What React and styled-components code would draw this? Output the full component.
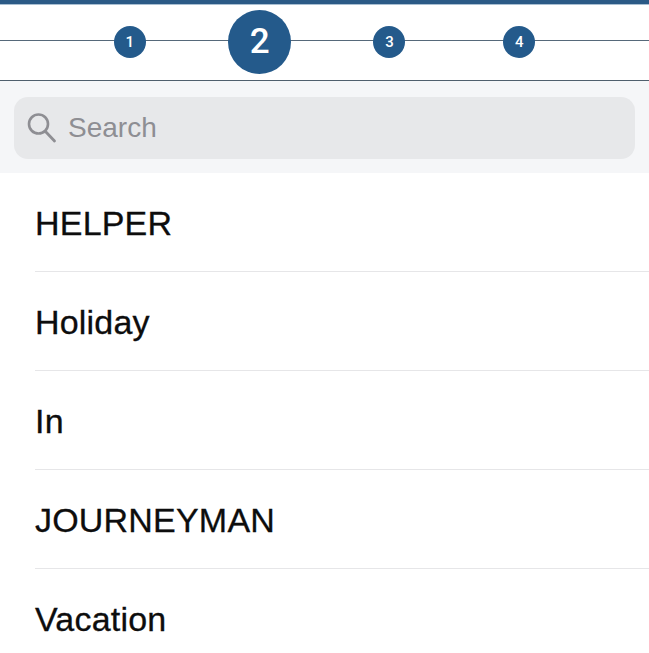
import React from "react";
import styled, { createGlobalStyle } from "styled-components";

const GlobalStyle = createGlobalStyle`
  html, body {
    margin: 0;
    padding: 0;
    background: #ffffff;
  }
  body {
    font-family: "Liberation Sans", Arial, sans-serif;
    overflow: hidden;
  }
`;

const Screen = styled.div`
  width: 649px;
  height: 653px;
  overflow: hidden;
  background: #ffffff;
`;

const TopBar = styled.div`
  height: 5px;
  background: #2b5a86;
  border-bottom: 1px solid #a9bfd2;
  box-sizing: border-box;
`;

const Stepper = styled.div`
  height: 76px;
  box-sizing: border-box;
  border-bottom: 1px solid #4f5f6d;
  padding: 0 64.9px;
  display: flex;
  align-items: center;
  background: linear-gradient(
    to bottom,
    transparent 35px,
    #56697a 35px,
    #56697a 36px,
    transparent 36px
  );
`;

const StepCell = styled.div`
  flex: 1;
  display: flex;
  justify-content: center;
  align-items: center;
`;

const StepDot = styled.div`
  width: ${(p) => (p.$active ? 63 : 32)}px;
  height: ${(p) => (p.$active ? 64 : 32)}px;
  border-radius: 50%;
  background: #245a8b;
  color: #ffffff;
  display: flex;
  align-items: center;
  justify-content: center;
  font-family: Roboto, "Liberation Sans", sans-serif;
  font-weight: 500;
  font-size: ${(p) => (p.$active ? 35 : 15)}px;
  margin-top: -2px;
`;

const SearchArea = styled.div`
  background: #f5f6f8;
  padding: 16px 14px 14px;
`;

const SearchBox = styled.div`
  height: 62px;
  border-radius: 14px;
  background: #e7e8ea;
  display: flex;
  align-items: center;
  gap: 11px;
  padding: 0 13px;
`;

const SearchText = styled.span`
  font-size: 28px;
  color: #8e8e93;
  font-family: "Liberation Sans", Arial, sans-serif;
`;

const List = styled.div`
  padding-left: 35px;
`;

const Row = styled.div`
  height: 99px;
  box-sizing: border-box;
  display: flex;
  align-items: center;
  border-bottom: 1px solid #e6e6e8;
  font-size: 34px;
  letter-spacing: 0.2px;
  color: #0d0d0d;
  padding-top: 2px;
  -webkit-text-stroke: 0.3px #0d0d0d;
`;

const SearchIcon = () => (
  <svg width="30" height="32" viewBox="0 0 30 32" fill="none">
    <circle cx="11.5" cy="12" r="9.5" stroke="#8e8e93" strokeWidth="2.6" />
    <line
      x1="18.5"
      y1="19.5"
      x2="27.5"
      y2="29"
      stroke="#8e8e93"
      strokeWidth="2.8"
      strokeLinecap="round"
    />
  </svg>
);

const steps = [1, 2, 3, 4];
const items = ["HELPER", "Holiday", "In", "JOURNEYMAN", "Vacation"];

const App = () => {
  return (
    <>
      <GlobalStyle />
      <Screen>
        <TopBar />
        <Stepper>
          {steps.map((s) => (
            <StepCell key={s}>
              <StepDot $active={s === 2}>{s}</StepDot>
            </StepCell>
          ))}
        </Stepper>
        <SearchArea>
          <SearchBox>
            <SearchIcon />
            <SearchText>Search</SearchText>
          </SearchBox>
        </SearchArea>
        <List>
          {items.map((item) => (
            <Row key={item}>{item}</Row>
          ))}
        </List>
      </Screen>
    </>
  );
};

export default App;
